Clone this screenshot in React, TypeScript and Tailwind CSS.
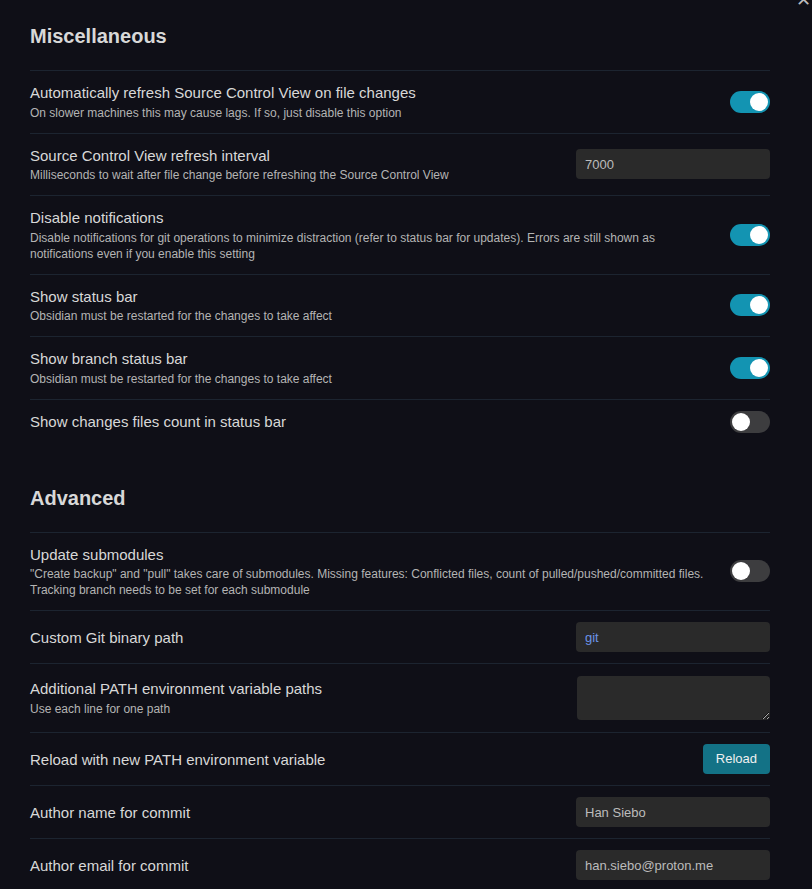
import React, { useState } from 'react';

type Control =
  | { kind: 'toggle'; on: boolean }
  | { kind: 'input'; value: string; accent?: boolean }
  | { kind: 'textarea' }
  | { kind: 'button'; label: string };

type Item = {
  name: string;
  desc?: string[];
  control: Control;
};

const misc: Item[] = [
  {
    name: 'Automatically refresh Source Control View on file changes',
    desc: ['On slower machines this may cause lags. If so, just disable this option'],
    control: { kind: 'toggle', on: true },
  },
  {
    name: 'Source Control View refresh interval',
    desc: ['Milliseconds to wait after file change before refreshing the Source Control View'],
    control: { kind: 'input', value: '7000' },
  },
  {
    name: 'Disable notifications',
    desc: [
      'Disable notifications for git operations to minimize distraction (refer to status bar for updates). Errors are still shown as',
      'notifications even if you enable this setting',
    ],
    control: { kind: 'toggle', on: true },
  },
  {
    name: 'Show status bar',
    desc: ['Obsidian must be restarted for the changes to take affect'],
    control: { kind: 'toggle', on: true },
  },
  {
    name: 'Show branch status bar',
    desc: ['Obsidian must be restarted for the changes to take affect'],
    control: { kind: 'toggle', on: true },
  },
  {
    name: 'Show changes files count in status bar',
    control: { kind: 'toggle', on: false },
  },
];

const advanced: Item[] = [
  {
    name: 'Update submodules',
    desc: [
      '"Create backup" and "pull" takes care of submodules. Missing features: Conflicted files, count of pulled/pushed/committed files.',
      'Tracking branch needs to be set for each submodule',
    ],
    control: { kind: 'toggle', on: false },
  },
  {
    name: 'Custom Git binary path',
    control: { kind: 'input', value: 'git', accent: true },
  },
  {
    name: 'Additional PATH environment variable paths',
    desc: ['Use each line for one path'],
    control: { kind: 'textarea' },
  },
  {
    name: 'Reload with new PATH environment variable',
    control: { kind: 'button', label: 'Reload' },
  },
  {
    name: 'Author name for commit',
    control: { kind: 'input', value: 'Han Siebo' },
  },
  {
    name: 'Author email for commit',
    control: { kind: 'input', value: 'han.siebo@proton.me' },
  },
];

const Toggle = ({ initial }: { initial: boolean }) => {
  const [on, setOn] = useState(initial);
  return (
    <button
      onClick={() => setOn(!on)}
      className={`relative w-[40px] h-[22px] rounded-full shrink-0 ${on ? 'bg-[#1394b2]' : 'bg-[#3d3d3f]'}`}
    >
      <span
        className={`absolute top-[2px] w-[18px] h-[18px] rounded-full bg-white ${on ? 'left-[20px]' : 'left-[2px]'}`}
      />
    </button>
  );
};

const ControlView = ({ c }: { c: Control }) => {
  if (c.kind === 'toggle') return <Toggle initial={c.on} />;
  if (c.kind === 'input')
    return (
      <input
        defaultValue={c.value}
        className={`w-[194px] h-[30px] px-[9px] rounded-[4px] bg-[#2a2a2a] text-[13px] outline-none ${c.accent ? 'text-[#6a93e6]' : 'text-[#bcbcbc]'}`}
      />
    );
  if (c.kind === 'textarea')
    return <textarea className="w-[193px] h-[44px] px-[9px] py-[5px] rounded-[4px] bg-[#2a2a2a] text-[13px] text-[#bcbcbc] outline-none block" />;
  return (
    <button className="h-[30px] px-[13px] rounded-[4px] bg-[#137286] text-[13px] text-[#f0f0f0]">
      {c.label}
    </button>
  );
};

const Row = ({ item }: { item: Item }) => (
  <div
    className={`flex items-center gap-[24px] border-t border-[#1c2430] ${item.desc ? 'py-[12px]' : 'py-[11px]'}`}
  >
    <div className="flex-1 min-w-0">
      <div className="text-[15px] leading-[19px] text-[#d8d8d8]">{item.name}</div>
      {item.desc && (
        <div className="pt-[2.5px] text-[12px] leading-[16px] text-[#b4b4b4]">
          {item.desc.map((d, i) => (
            <div key={i}>{d}</div>
          ))}
        </div>
      )}
    </div>
    <ControlView c={item.control} />
  </div>
);

const Section = ({ title, items }: { title: string; items: Item[] }) => (
  <section>
    <h3 className="text-[20px] leading-[24px] font-bold text-[#d8d8d8] mb-[22px]">{title}</h3>
    {items.map((it) => (
      <Row key={it.name} item={it} />
    ))}
  </section>
);

export default function App() {
  return (
    <div
      className="relative min-h-[889px] bg-[#0f0f17] overflow-hidden"
      style={{ fontFamily: '"Liberation Sans", Arial, sans-serif' }}
    >
      {/* modal close button, cut off by the viewport */}
      <span className="absolute -top-[9px] right-[1px] text-[18px] leading-none text-[#bdbdbd]">✕</span>
      <div className="w-[740px] ml-[30px] pt-[24px] flex flex-col gap-[42px]">
        <Section title="Miscellaneous" items={misc} />
        <Section title="Advanced" items={advanced} />
      </div>
    </div>
  );
}
